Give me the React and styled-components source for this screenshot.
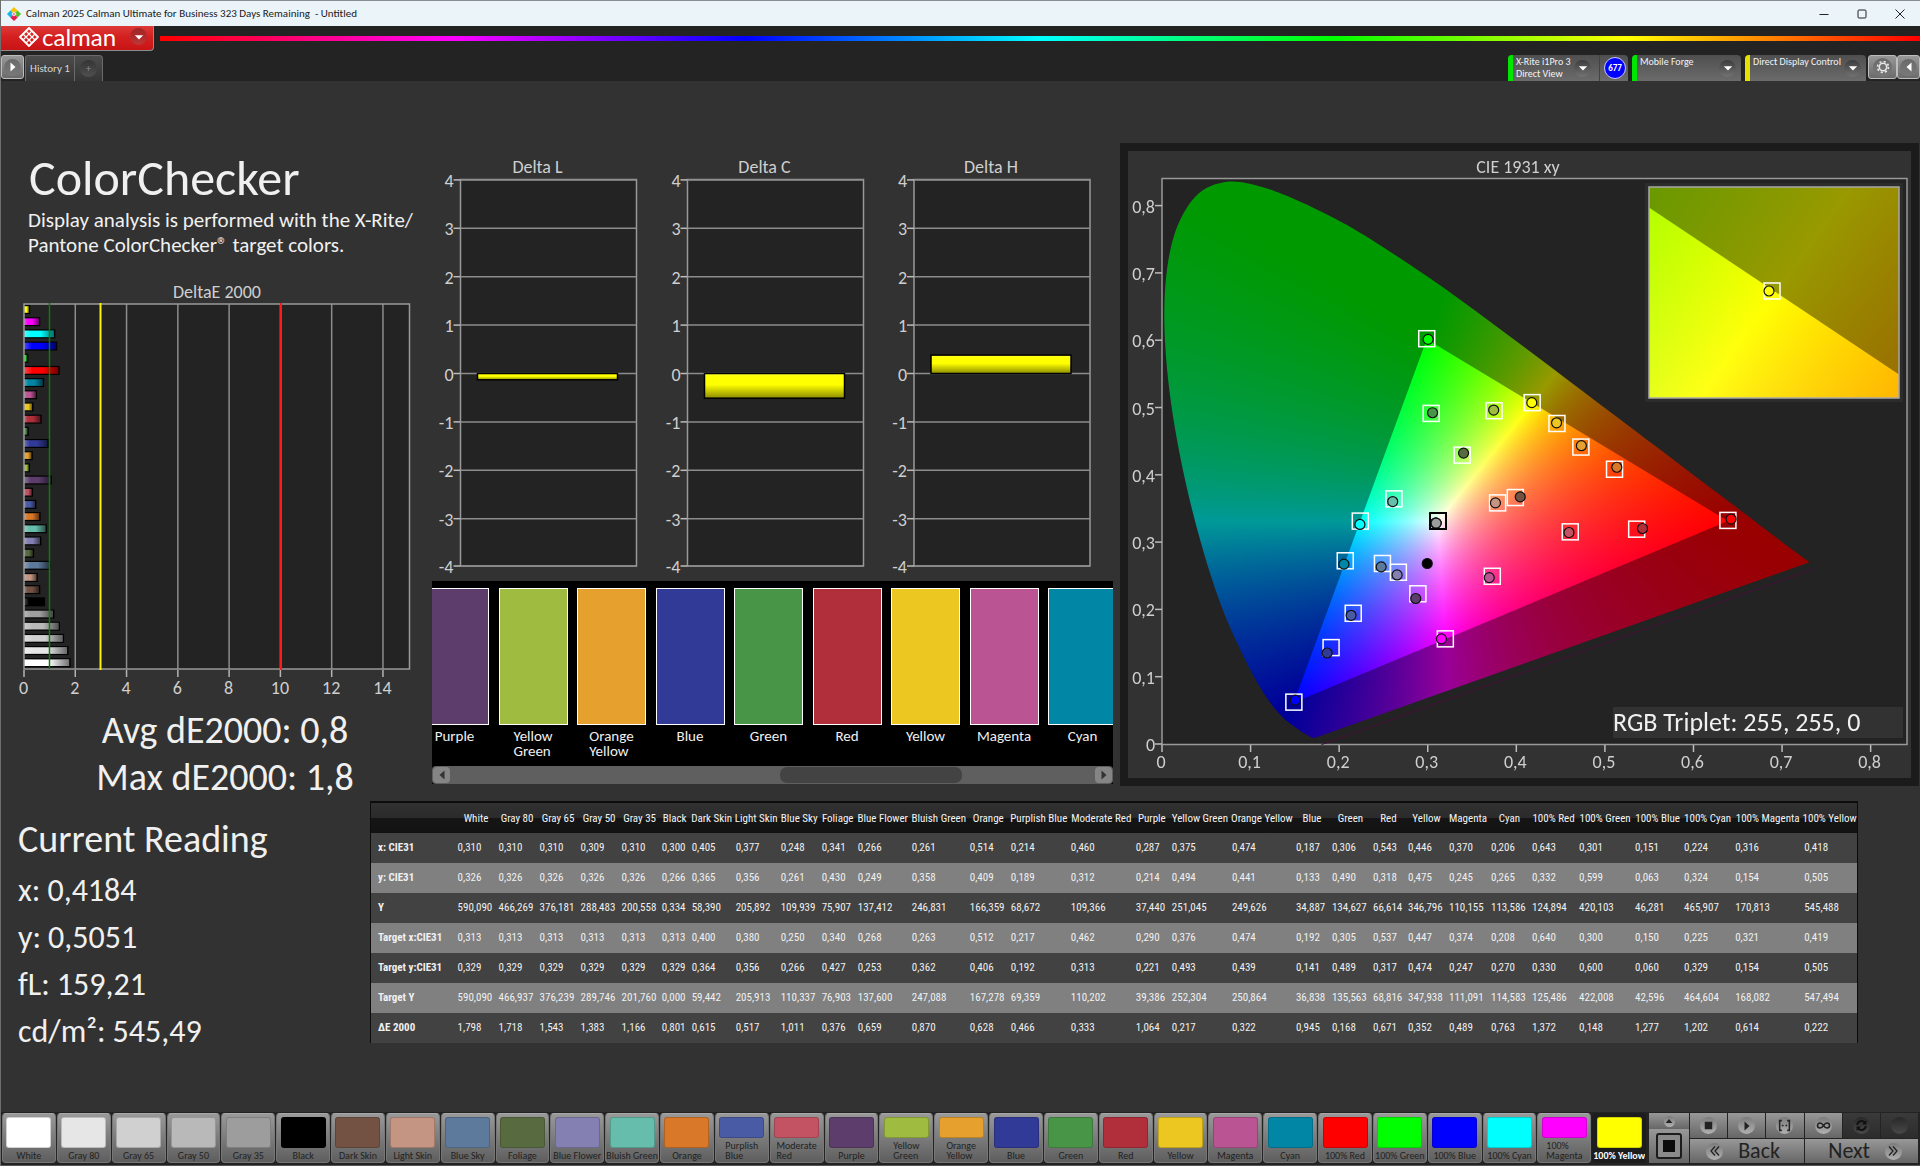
import React, { useEffect, useRef } from 'react';
import styled, { createGlobalStyle, css } from 'styled-components';

const SANS = "Carlito, Calibri, Lato, sans-serif";
const NARROW = "'Roboto Condensed', 'Noto Sans', sans-serif";

/* ---------- data ---------- */

const PATCHES = [
  ['White', '#ffffff', 0.310, 0.326, '590,090', 0.313, 0.329, '590,090', 1.798],
  ['Gray 80', '#e6e6e6', 0.310, 0.326, '466,269', 0.313, 0.329, '466,937', 1.718],
  ['Gray 65', '#d0d0d0', 0.310, 0.326, '376,181', 0.313, 0.329, '376,239', 1.543],
  ['Gray 50', '#b9b9b9', 0.309, 0.326, '288,483', 0.313, 0.329, '289,746', 1.383],
  ['Gray 35', '#9d9d9d', 0.310, 0.326, '200,558', 0.313, 0.329, '201,760', 1.166],
  ['Black', '#000000', 0.300, 0.266, '0,334', 0.313, 0.329, '0,000', 0.801],
  ['Dark Skin', '#735244', 0.405, 0.365, '58,390', 0.400, 0.364, '59,442', 0.615],
  ['Light Skin', '#c39582', 0.377, 0.356, '205,892', 0.380, 0.356, '205,913', 0.517],
  ['Blue Sky', '#5d7a9d', 0.248, 0.261, '109,939', 0.250, 0.266, '110,337', 1.011],
  ['Foliage', '#586b40', 0.341, 0.430, '75,907', 0.340, 0.427, '76,903', 0.376],
  ['Blue Flower', '#8480b1', 0.266, 0.249, '137,412', 0.268, 0.253, '137,600', 0.659],
  ['Bluish Green', '#66bdab', 0.261, 0.358, '246,831', 0.263, 0.362, '247,088', 0.870],
  ['Orange', '#d97829', 0.514, 0.409, '166,359', 0.512, 0.406, '167,278', 0.628],
  ['Purplish Blue', '#4a5ba6', 0.214, 0.189, '68,672', 0.217, 0.192, '69,359', 0.466],
  ['Moderate Red', '#c35362', 0.460, 0.312, '109,366', 0.462, 0.313, '110,202', 0.333],
  ['Purple', '#5c3d6b', 0.287, 0.214, '37,440', 0.290, 0.221, '39,386', 1.064],
  ['Yellow Green', '#9fbb40', 0.375, 0.494, '251,045', 0.376, 0.493, '252,304', 0.217],
  ['Orange Yellow', '#e6a02e', 0.474, 0.441, '249,626', 0.474, 0.439, '250,864', 0.322],
  ['Blue', '#323a97', 0.187, 0.133, '34,887', 0.192, 0.141, '36,838', 0.945],
  ['Green', '#489548', 0.306, 0.490, '134,627', 0.305, 0.489, '135,563', 0.168],
  ['Red', '#b02f3a', 0.543, 0.318, '66,614', 0.537, 0.317, '68,816', 0.671],
  ['Yellow', '#ecc721', 0.446, 0.475, '346,796', 0.447, 0.474, '347,938', 0.352],
  ['Magenta', '#bb5493', 0.370, 0.245, '110,155', 0.374, 0.247, '111,091', 0.489],
  ['Cyan', '#0286a6', 0.206, 0.265, '113,586', 0.208, 0.270, '114,583', 0.763],
  ['100% Red', '#ff0000', 0.643, 0.332, '124,894', 0.640, 0.330, '125,486', 1.372],
  ['100% Green', '#00ff00', 0.301, 0.599, '420,103', 0.300, 0.600, '422,008', 0.148],
  ['100% Blue', '#0000ff', 0.151, 0.063, '46,281', 0.150, 0.060, '42,596', 1.277],
  ['100% Cyan', '#00ffff', 0.224, 0.324, '465,907', 0.225, 0.329, '464,604', 1.202],
  ['100% Magenta', '#ff00ff', 0.316, 0.154, '170,813', 0.321, 0.154, '168,082', 0.614],
  ['100% Yellow', '#ffff00', 0.418, 0.505, '545,488', 0.419, 0.505, '547,494', 0.222],
].map(([name, color, x, y, Y, tx, ty, tY, dE]) => ({ name, color, x, y, Y, tx, ty, tY, dE }));

const COLUMN_WIDTHS = [
  85, 41, 41, 41, 41, 40, 30, 44, 45, 41, 36, 54, 58, 41, 60, 65, 36, 60, 64, 36, 41, 35, 41, 42, 41,
  47, 56, 49, 51, 69, 55,
];

const comma = (n) => n.toFixed(3).replace('.', ',');

const TABLE_ROWS = [
  ['x: CIE31', (p) => comma(p.x)],
  ['y: CIE31', (p) => comma(p.y)],
  ['Y', (p) => p.Y],
  ['Target x:CIE31', (p) => comma(p.tx)],
  ['Target y:CIE31', (p) => comma(p.name === 'Bluish Green' ? 0.362 : p.ty)],
  ['Target Y', (p) => p.tY],
  ['ΔE 2000', (p) => comma(p.dE)],
];

const TWO_LINE = ['Purplish Blue', 'Moderate Red', 'Yellow Green', 'Orange Yellow', '100% Magenta'];

const LOCUS = [
  [0.1733, 0.0075], [0.1714, 0.0078], [0.1689, 0.009], [0.1644, 0.0125], [0.1566, 0.0187],
  [0.144, 0.0307], [0.1355, 0.0409], [0.1241, 0.0588], [0.1096, 0.0878], [0.0913, 0.1337],
  [0.0687, 0.2017], [0.0454, 0.296], [0.0235, 0.4137], [0.0082, 0.5384], [0.0039, 0.6548],
  [0.0139, 0.7502], [0.0389, 0.812], [0.0743, 0.8338], [0.1142, 0.8262], [0.1547, 0.8059],
  [0.1929, 0.7816], [0.2296, 0.7543], [0.3016, 0.6923], [0.3731, 0.6245], [0.4441, 0.5547],
  [0.5125, 0.4866], [0.5752, 0.4242], [0.627, 0.3725], [0.6658, 0.334], [0.6915, 0.3083],
  [0.717, 0.2829], [0.732, 0.2685],
];

/* ---------- page ---------- */

const GlobalStyle = createGlobalStyle`
  * { box-sizing: border-box; }
  body { margin: 0; background: #323232; color: #f0f0f0; font-family: ${SANS}; }
  button { font-family: inherit; border: 0; padding: 0; margin: 0; cursor: pointer; }
  h1, h2, p, dl, dd { margin: 0; font-weight: 400; }
`;

const Page = styled.div`
  min-height: 100vh;
  display: flex;
  flex-direction: column;
  border-left: 1px solid #6e6e6e;
`;

const TitleBar = styled.header`
  height: 26px;
  display: flex;
  align-items: center;
  gap: 5px;
  padding: 0 14px 0 6px;
  border-top: 1px solid #8a8f92;
  background: #ebf4f9;
  color: #1a1a1a;
  font-size: 11px;
`;

const WindowTitle = styled.span`
  flex: 1;
  white-space: pre;
`;

const WindowButtons = styled.div`
  display: flex;
  gap: 26px;
`;

const WindowButton = styled.button`
  width: 12px;
  height: 12px;
  background: none;
  display: flex;
`;

const Chrome = styled.div`
  background: #232323;
`;

const BrandRow = styled.div`
  display: flex;
  align-items: flex-start;
  gap: 6px;
  height: 29px;
`;

const BrandButton = styled.button`
  width: 153px;
  height: 25px;
  display: flex;
  align-items: center;
  padding: 0 6px 3px 18px;
  gap: 3px;
  color: #fff;
  background: linear-gradient(#dd3a38, #d42020 45%, #c81414);
  border-right: 1px solid #8d8d8d;
  border-bottom: 1px solid #8d8d8d;
  border-radius: 0 0 4px 0;
`;

const BrandName = styled.span`
  flex: 1;
  text-align: left;
  font: 24px/20px Lato, sans-serif;
`;

const Rainbow = styled.div`
  flex: 1;
  height: 5px;
  margin-top: 10px;
  background: linear-gradient(90deg, #f00, #f0f, #00f, #0ff, #0f0, #ff0, #f00);
`;

const TabRow = styled.div`
  display: flex;
  justify-content: space-between;
  height: 26px;
`;

const TabGroup = styled.div`
  display: flex;
  align-items: stretch;
  gap: ${(p) => p.$gap || 0}px;
`;

const Knob = styled.span`
  flex: none;
  width: ${(p) => p.$size || 17}px;
  height: ${(p) => p.$size || 17}px;
  border-radius: 50%;
  display: flex;
  align-items: center;
  justify-content: center;
  background: ${(p) => p.$light
    ? 'linear-gradient(#7b7b7b, #b0b0b0)'
    : 'linear-gradient(rgba(0,0,0,0.28), rgba(150,150,150,0.25))'};
`;

const SquareButton = styled.button`
  width: ${(p) => p.$width || 29}px;
  height: 24px;
  display: flex;
  align-items: center;
  justify-content: center;
  color: #fff;
  background: linear-gradient(#989898, #6b6b6b);
  border: 1px solid #bdbdbd;
  border-radius: 3px;
`;

const Tab = styled.button`
  width: ${(p) => p.$width}px;
  display: flex;
  align-items: center;
  justify-content: center;
  color: #d6d6d6;
  font-size: 11px;
  background: linear-gradient(#4c4c4c, #353535);
  border: 1px solid #6a6a6a;
  border-bottom: 0;
  border-radius: ${(p) => p.$radius};
  & + & { border-left: 0; color: #8a8a8a; }
`;

const Device = styled.button`
  width: ${(p) => p.$width}px;
  display: flex;
  align-items: flex-start;
  gap: 3px;
  padding-right: ${(p) => p.$inset || 5}px;
  color: #f4f4f4;
  font-size: 10px;
  line-height: 12px;
  text-align: left;
  background: linear-gradient(#4f4f4f, #6b6b6b);
  border-radius: 4px 4px 0 0;
  overflow: hidden;
  &::before {
    content: '';
    width: 5px;
    align-self: stretch;
    background: ${(p) => p.$status};
  }
`;

const DeviceName = styled.span`
  flex: 1;
  padding-top: 1px;
  white-space: pre;
`;

const DeviceArrow = styled.span`
  align-self: center;
`;

const Counter = styled.span`
  align-self: stretch;
  display: flex;
  align-items: center;
  margin-left: 5px;
  padding-left: 4px;
  border-left: 1px solid #424242;
`;

const CounterBadge = styled.span`
  width: 22px;
  height: 22px;
  border-radius: 50%;
  border: 1px solid #c8c8ff;
  background: #0000ff;
  color: #fff;
  font: bold 9px/20px ${SANS};
  text-align: center;
`;

const Main = styled.main`
  flex: 1;
  padding-top: 62px;
`;

const Analysis = styled.section`
  display: grid;
  grid-template-columns: 431fr 688fr 800fr;
  align-items: start;
`;

const Column = styled.div`
  padding-top: 4px;
  min-width: 0;
`;

const Title = styled.h1`
  padding-left: 28px;
  font-size: 50px;
  line-height: 61px;
`;

const Intro = styled.p`
  padding-left: 27px;
  font-size: 21px;
  line-height: 25px;
`;

const Summary = styled.p`
  padding-left: 17px;
  text-align: center;
  font-size: 38px;
  line-height: 47px;
`;

const Chart = styled.svg`
  display: block;
  width: 100%;
  height: auto;
  font-family: ${SANS};
  font-size: 18px;
  fill: #cfcfcf;
`;

const Strip = styled.div`
  margin-right: 7px;
  overflow: hidden;
  background: #000;
`;

const StripRow = styled.div`
  display: flex;
  justify-content: space-between;
  height: 185px;
  margin: 0 -3px 0 -11px;
  padding-top: 7px;
`;

const StripItem = styled.div`
  width: 67px;
  display: flex;
  flex-direction: column;
  align-items: center;
  font-size: 15px;
  line-height: 15px;
  white-space: pre-line;
  &::before {
    content: '';
    width: 100%;
    height: 135px;
    margin-bottom: 4px;
    border: 1px solid #fff;
    background: ${(p) => p.$color};
  }
`;

const ScrollBar = styled.div`
  display: flex;
  justify-content: space-between;
  align-items: center;
  height: 18px;
  padding: 0 1px;
  background: #5f5f5f;
  border-radius: 4px;
`;

const ScrollTrack = styled.div`
  flex: 1;
  display: grid;
  grid-template-columns: 331fr 182fr 133fr;
`;

const ScrollThumb = styled.div`
  grid-column: 2;
  height: 16px;
  border-radius: 7px;
  background: #434343;
`;

const ScrollButton = styled.button`
  width: 17px;
  height: 16px;
  display: flex;
  align-items: center;
  justify-content: center;
  background: #858585;
  border-radius: 4px;
`;

const CiePanel = styled.div`
  border: 8px solid #1b1b1b;
  margin-right: 1px;
  background: #323232;
`;

const Layer = styled.div`
  position: relative;
`;

const CieCanvas = styled.canvas`
  position: absolute;
  left: calc(100% * 34 / 783);
  top: calc(100% * 27 / 627);
  width: calc(100% * 745 / 783);
  height: calc(100% * 566 / 627);
`;

const OverlayChart = styled(Chart)`
  position: relative;
`;

const Results = styled.section`
  display: grid;
  grid-template-columns: 369fr 1488fr 62fr;
  align-items: start;
`;

const Reading = styled.div`
  padding: 15px 0 0 17px;
  white-space: nowrap;
`;

const ReadingTitle = styled.h2`
  margin-bottom: 4px;
  font-size: 38px;
  line-height: 47px;
`;

const ReadingList = styled.dl`
  font-size: 32px;
  line-height: 47px;
`;

const ReadingItem = styled.div`
  display: flex;
  gap: 7px;
`;

const DataTable = styled.table`
  width: 100%;
  table-layout: fixed;
  border-collapse: collapse;
  border-top: 2px solid #0c0c0c;
  border-left: 1px solid #0c0c0c;
  border-right: 1px solid #0c0c0c;
  font: 11px/14px ${NARROW};
  white-space: nowrap;
  th, td { padding: 0 0 0 2px; text-align: left; }
  thead tr { height: 31px; background: linear-gradient(#313131, #2b2b2b 50%, #151515 51%, #121212); }
  thead th { padding: 2px 0 0; text-align: center; font-weight: 400; color: #f4f4f4; }
  tbody tr { height: 30px; background: #424242; }
  tbody tr:nth-child(even) { background: #808080; }
  tbody th { padding-left: 7px; font-weight: 700; }
`;

const Footer = styled.footer`
  display: grid;
  grid-template-columns: 1645fr 274fr;
  height: 54px;
  padding: 1px 0 2px 1px;
  background: #232323;
  border-bottom: 1px solid #555;
`;

const PatchBar = styled.nav`
  display: grid;
  grid-template-columns: repeat(30, minmax(0, 1fr));
  gap: 1px;
`;

const PatchButton = styled.button`
  display: flex;
  flex-direction: column;
  align-items: center;
  justify-content: space-between;
  padding: 3px 0 1px;
  color: #222;
  background: linear-gradient(#999, #5e5e5e);
  border: 1px solid #777;
  border-top-color: #a8a8a8;
  border-radius: 4px;
  font-size: 10px;
  line-height: 10px;
  text-align: left;
  white-space: pre;
  overflow: hidden;
  ${(p) => p.$selected && css`
    color: #fff;
    font-weight: 700;
    background: #1d1d1d;
    border-color: #1d1d1d;
  `}
`;

const PatchColor = styled.span`
  width: 45px;
  height: ${(p) => (p.$short ? 21 : 31)}px;
  border-radius: 3px;
  background: ${(p) => p.$color};
  border: 1px solid rgba(0, 0, 0, 0.18);
`;

const Transport = styled.div`
  display: grid;
  grid-template-columns: 40px 1fr;
  gap: 1px;
  padding-left: 3px;
  padding-right: 2px;
`;

const TransportSide = styled.div`
  display: grid;
  grid-template-rows: 16px 1fr;
`;

const TransportMain = styled.div`
  display: grid;
  grid-template-rows: 25px 1fr;
  gap: 1px;
`;

const ButtonRow = styled.div`
  display: grid;
  grid-auto-flow: column;
  grid-auto-columns: 1fr;
  gap: 1px;
`;

const MetalButton = styled.button`
  display: flex;
  align-items: center;
  justify-content: center;
  color: #222;
  background: ${(p) => (p.$dim ? 'linear-gradient(#3a3a3a, #2c2c2c)' : 'linear-gradient(#989898, #666)')};
`;

const StepButton = styled(MetalButton)`
  justify-content: ${(p) => (p.$end ? 'flex-end' : 'flex-start')};
  gap: 15px;
  padding: 0 16px;
  font-size: 22px;
  line-height: 22px;
`;

const StopFrame = styled.span`
  width: 26px;
  height: 26px;
  display: flex;
  align-items: center;
  justify-content: center;
  border: 2px solid #1c1c1c;
  border-radius: 3px;
  background: #8a8a8a;
  &::before {
    content: '';
    width: 12px;
    height: 12px;
    background: #0c0c0c;
  }
`;

/* ---------- icons ---------- */

const Icon = ({ size = 12, children, ...rest }) => (
  <svg width={size} height={size} viewBox="0 0 12 12" fill="none" stroke="none" aria-hidden="true" {...rest}>
    {children}
  </svg>
);
const Down = () => <Icon size={10}><path d="M1 4h10l-5 5z" fill="#fff" /></Icon>;
const Play = ({ color = '#fff' }) => <Icon size={10}><path d="M3 0.5v11l6-5.5z" fill={color} /></Icon>;
const PlayLeft = ({ color = '#fff' }) => <Icon size={10}><path d="M9 0.5v11l-6-5.5z" fill={color} /></Icon>;
const Stop = () => <Icon size={9}><path d="M1 1h10v10h-10z" fill="#222" /></Icon>;

const AppIcon = () => (
  <svg width="14" height="14" viewBox="0 0 14 14" aria-hidden="true">
    <path d="M7 0l3.6 3.6L7 7.2 3.4 3.6z" fill="#f7c500" />
    <path d="M3.4 3.5L7 7.1l-3.600 3.500L0 7.100z" fill="#12b6e8" />
    <path d="M10.6 3.5L14 7.1l-3.400 3.500L7 7.100z" fill="#54c320" />
    <path d="M7 6.9l3.6 3.6L7 14l-3.600-3.500z" fill="#e6194b" />
    <path d="M7 4.400l2.600 2.600L7 9.600 4.400 7z" fill="#fff" />
    <path d="M7 5.300l1.700 1.700L7 8.700 5.300 7z" fill="#f08cae" />
  </svg>
);

const BrandMark = () => (
  <svg width="20" height="20" viewBox="0 0 20 20" aria-hidden="true">
    <path d="M10 1l9 9-9 9L1 10z" fill="none" stroke="#fff" strokeWidth="1.8" strokeLinejoin="round" />
    <path d="M7 4l9 9M4 7l9 9M13 4l-9 9M16 7l-9 9" stroke="#fff" strokeWidth="1.200" />
  </svg>
);

const Gear = () => (
  <Icon size={14}>
    <circle cx="6" cy="6" r="3.2" stroke="#e6e6e6" strokeWidth="1.4" />
    <circle cx="6" cy="6" r="4.7" stroke="#e6e6e6" strokeWidth="1.4" strokeDasharray="1.8 1.89" />
  </Icon>
);
const Bracket = () => (
  <Icon size={13} stroke="#222" strokeWidth="1.4">
    <path d="M3.500 1.500H1.500v9h2M8.500 1.500h2v9h-2M3.500 6h1.600M6.900 6h1.600" />
  </Icon>
);
const Infinity8 = () => (
  <Icon size={15} stroke="#222" strokeWidth="1.2">
    <path d="M6 6C4.800 4.200 3.900 4 3.200 4a2 2 0 0 0 0 4C3.900 8 4.800 7.800 6 6s2.100-2 2.800-2a2 2 0 0 1 0 4C8.100 8 7.200 7.800 6 6z" />
  </Icon>
);
const Refresh = () => (
  <Icon size={13} stroke="#111" strokeWidth="1.8">
    <path d="M2 5.500A4 4 0 0 1 9 3.300M10 6.500A4 4 0 0 1 3 8.700" />
    <path d="M10.500 1v4H6.500zM1.500 11V7h4z" fill="#111" stroke="none" />
  </Icon>
);
const Chevrons = ({ right }) => (
  <Icon size={12} stroke="#222" strokeWidth="1.3">
    <path d={right ? 'M2 1.500L6 6l-4 4.500M6 1.500L10 6l-4 4.500' : 'M10 1.500L6 6l4 4.500M6 1.500L2 6l4 4.500'} />
  </Icon>
);

/* ---------- charts ---------- */

function DeltaEChart() {
  const x = (v) => 24 + v * 25.64;
  const bars = [...PATCHES].reverse();
  return (
    <Chart viewBox="1 259 431 449" role="img" aria-label="DeltaE 2000">
      <defs>
        <linearGradient id="barShade">
          <stop offset="0" stopColor="#fff" stopOpacity="0.3" />
          <stop offset="0.25" stopColor="#fff" stopOpacity="0" />
          <stop offset="0.55" stopColor="#000" stopOpacity="0" />
          <stop offset="1" stopColor="#000" stopOpacity="0.55" />
        </linearGradient>
      </defs>
      <text x="217" y="299" textAnchor="middle">DeltaE 2000</text>
      <rect x="24" y="305" width="385.500" height="365" fill="#232323" />
      {[2, 4, 6, 8, 10, 12, 14].map((v) => (
        <path key={v} d={`M${x(v)} 305V670`} stroke="#8c8c8c" strokeWidth="1.500" />
      ))}
      {bars.map((p, i) => {
        const y = 306 + i * 12.18;
        const width = p.dE * 25.64;
        return (
          <g key={p.name}>
            <rect x="24" y={y} width={width + 0.5} height="9" fill="#000" />
            <rect x="24" y={y + 1.2} width={Math.max(1, width - 1)} height="6.600" fill={p.color} />
            <rect x="24" y={y + 1.2} width={Math.max(1, width - 1)} height="6.600" fill="url(#barShade)" />
          </g>
        );
      })}
      <rect x="24" y="305" width="385.500" height="365" fill="none" stroke="#999" strokeWidth="1.500" />
      <path d="M49.500 304V670" stroke="#0a7d0a" strokeWidth="1.500" />
      <path d="M100.500 304V671" stroke="#fbf300" strokeWidth="2" />
      <path d="M281 304V671" stroke="#ff1a1a" strokeWidth="2" />
      {[0, 2, 4, 6, 8, 10, 12, 14].map((v) => (
        <g key={v}>
          <path d={`M${x(v)} 671V678`} stroke="#b5b5b5" strokeWidth="1.500" />
          <text x={x(v) - 0.5} y="695" textAnchor="middle">{v}</text>
        </g>
      ))}
    </Chart>
  );
}

function DeltaCharts() {
  const y0 = 373.5;
  const unit = 48.4;
  const charts = [
    ['Delta L', 460.5, -0.13],
    ['Delta C', 687.5, -0.51],
    ['Delta H', 914, 0.38],
  ];
  return (
    <Chart viewBox="432 147 688 434" role="img" aria-label="Delta L, Delta C and Delta H">
      <defs>
        <linearGradient id="yellowBar" x2="0" y2="1">
          <stop offset="0" stopColor="#ffff30" />
          <stop offset="0.15" stopColor="#ffff00" />
          <stop offset="0.45" stopColor="#ffff00" />
          <stop offset="1" stopColor="#8c8c00" />
        </linearGradient>
      </defs>
      {charts.map(([name, left, value]) => {
        const top = value > 0 ? y0 - value * unit : y0;
        return (
          <g key={name}>
            <text x={left + 77} y="173" textAnchor="middle">{name}</text>
            <rect x={left} y="179.500" width="176" height="386.500" fill="#232323" stroke="#999" strokeWidth="1.500" />
            {[4, 3, 2, 1, 0, -1, -2, -3, -4].map((v) => {
              const y = v === -4 ? 566 : y0 - v * unit;
              return (
                <g key={v}>
                  <path d={`M${left - 7} ${y}H${left}`} stroke="#bbb" strokeWidth="1.500" />
                  <path d={`M${left} ${y}h176`} stroke="#8c8c8c" strokeWidth="1.500" />
                  <text x={left - 7} y={y + 7} textAnchor="end">{v}</text>
                </g>
              );
            })}
            <rect
              x={left + 17} y={top} width="140" height={Math.abs(value) * unit}
              fill="url(#yellowBar)" stroke="#000" strokeWidth="1.500"
            />
          </g>
        );
      })}
    </Chart>
  );
}

function paintPixels(width, height, toXY, gain) {
  const c = document.createElement('canvas');
  c.width = width;
  c.height = height;
  const ctx = c.getContext('2d');
  const img = ctx.createImageData(width, height);
  for (let j = 0; j < height; j += 1) {
    for (let i = 0; i < width; i += 1) {
      const [x, y] = toXY(i + 0.5, j + 0.5);
      const X = x / y;
      const Z = (1 - x - y) / y;
      const rgb = [
        3.2406 * X - 1.5372 - 0.4986 * Z,
        -0.9689 * X + 1.8758 + 0.0415 * Z,
        0.0557 * X - 0.204 + 1.057 * Z,
      ].map((v) => Math.max(0, v));
      const max = Math.max(...rgb) || 1;
      const k = (j * width + i) * 4;
      rgb.forEach((v, n) => {
        img.data[k + n] = 255 * gain * (v / max);
      });
      img.data[k + 3] = 255;
    }
  }
  ctx.putImageData(img, 0, 0);
  return c;
}

function tracePolygon(ctx, points) {
  ctx.beginPath();
  points.forEach(([x, y], i) => (i ? ctx.lineTo(x, y) : ctx.moveTo(x, y)));
  ctx.closePath();
}

const PLOT = { left: 1162, top: 178, width: 745, height: 566, kx: 885.8, ky: 673 };
const INSET = { left: 487, top: 9, width: 250, height: 211, kx: 5000, ky: 4200, cx: 612, cy: 113 };
const GAMUT = [[0.64, 0.33], [0.3, 0.6], [0.15, 0.06]];

function paintDiagram(canvas) {
  const { width, height, kx, ky } = PLOT;
  const ctx = canvas.getContext('2d');
  const toPx = ([x, y]) => [x * kx - 1, height - 1 - y * ky];
  const toXY = (i, j) => [(i + 1) / kx, Math.max(0.0005, (height - 1 - j) / ky)];

  ctx.fillStyle = '#232323';
  ctx.fillRect(0, 0, width, height);

  const pts = LOCUS.map(toPx);
  ctx.save();
  ctx.beginPath();
  ctx.moveTo(...pts[0]);
  for (let i = 0; i < pts.length - 1; i += 1) {
    const p0 = pts[Math.max(0, i - 1)];
    const p1 = pts[i];
    const p2 = pts[i + 1];
    const p3 = pts[Math.min(pts.length - 1, i + 2)];
    ctx.bezierCurveTo(
      p1[0] + (p2[0] - p0[0]) / 6, p1[1] + (p2[1] - p0[1]) / 6,
      p2[0] - (p3[0] - p1[0]) / 6, p2[1] - (p3[1] - p1[1]) / 6,
      p2[0], p2[1],
    );
  }
  ctx.closePath();
  ctx.clip();
  ctx.drawImage(paintPixels(width, height, toXY, 0.6), 0, 0);
  ctx.restore();

  ctx.save();
  tracePolygon(ctx, GAMUT.map(toPx));
  ctx.clip();
  ctx.drawImage(paintPixels(width, height, toXY, 1), 0, 0);
  ctx.restore();

  const a = INSET;
  const toInsetPx = ([x, y]) => [a.cx + (x - 0.419) * a.kx, a.cy - (y - 0.5055) * a.ky];
  const toInsetXY = (i, j) => [
    0.419 + (i + a.left - a.cx) / a.kx,
    0.5055 - (j + a.top - a.cy) / a.ky,
  ];
  ctx.fillStyle = '#2c2c2c';
  ctx.fillRect(a.left - 4, a.top - 4, a.width + 8, a.height + 8);
  ctx.drawImage(paintPixels(a.width, a.height, toInsetXY, 0.6), a.left, a.top);
  ctx.save();
  ctx.beginPath();
  ctx.rect(a.left, a.top, a.width, a.height);
  ctx.clip();
  tracePolygon(ctx, GAMUT.map(toInsetPx));
  ctx.clip();
  ctx.drawImage(paintPixels(a.width, a.height, toInsetXY, 1), a.left, a.top);
  ctx.restore();
}

function CieChart() {
  const ref = useRef(null);
  useEffect(() => paintDiagram(ref.current), []);
  const x = (v) => PLOT.left + v * PLOT.kx;
  const y = (v) => 744 - v * PLOT.ky;
  const label = (v) => (v ? `0,${v}` : '0');
  const ticks = [0, 1, 2, 3, 4, 5, 6, 7, 8];
  return (
    <Layer>
      <CieCanvas ref={ref} width={PLOT.width} height={PLOT.height} />
      <OverlayChart viewBox="1128 151 783 627" role="img" aria-label="CIE 1931 xy">
        <text x="1518" y="173" textAnchor="middle">CIE 1931 xy</text>
        <rect x="1162" y="178.500" width="745" height="566" fill="none" stroke="#999" strokeWidth="1.500" />
        <path d={`M${x(0.18)} ${y(-0.001)}L${x(0.735)} ${y(0.26)}`} stroke="#451038" strokeWidth="1" />
        {ticks.map((v) => (
          <g key={v}>
            <path d={`M${x(v / 10)} 745v7`} stroke="#bbb" strokeWidth="1.500" />
            <path d={`M1162 ${y(v / 10)}h-7`} stroke="#bbb" strokeWidth="1.500" />
            <text x={x(v / 10) - 1} y="768" textAnchor="middle">{label(v)}</text>
            <text x="1155" y={y(v / 10) + 7} textAnchor="end">{label(v)}</text>
          </g>
        ))}
        {PATCHES.filter((p) => p.name !== 'White').map((p) => {
          const neutral = p.tx === 0.313;
          return (
            <g key={p.name} strokeWidth="1.500">
              <rect
                x={x(p.tx) - 9} y={y(p.ty) - 9.5} width="16" height="16"
                fill="none" stroke={neutral ? '#000' : '#fff'}
              />
              <circle cx={x(p.x) - 0.5} cy={y(p.y) - 1.5} r="5" fill={p.color} stroke="#111" strokeWidth="1.200" />
            </g>
          );
        })}
        <rect x="1649" y="187" width="250" height="211" fill="none" stroke="#a8a8a8" strokeWidth="1.500" />
        <rect x="1764" y="283" width="16" height="16" fill="none" stroke="#fff" strokeWidth="1.500" />
        <circle cx="1769" cy="291" r="5" fill="#ffff00" stroke="#111" strokeWidth="1.200" />
        <rect x="1613" y="707" width="290" height="31" fill="#323232" />
        <text x="1613" y="731" fontSize="26" fill="#f0f0f0">RGB Triplet: 255, 255, 0</text>
      </OverlayChart>
    </Layer>
  );
}

/* ---------- app ---------- */

const twoLines = (name) => name.replace(' ', '\n');

export default function App() {
  return (
    <Page>
      <GlobalStyle />
      <TitleBar>
        <AppIcon />
        <WindowTitle>Calman 2025 Calman Ultimate for Business 323 Days Remaining  - Untitled</WindowTitle>
        <WindowButtons>
          <WindowButton aria-label="Minimize"><Icon stroke="#222"><path d="M1.500 6.500h9" /></Icon></WindowButton>
          <WindowButton aria-label="Maximize"><Icon stroke="#222"><rect x="2" y="2" width="8" height="8" rx="1" /></Icon></WindowButton>
          <WindowButton aria-label="Close"><Icon stroke="#222"><path d="M1.500 1.500l9 9M10.500 1.500l-9 9" /></Icon></WindowButton>
        </WindowButtons>
      </TitleBar>

      <Chrome>
        <BrandRow>
          <BrandButton aria-haspopup="menu">
            <BrandMark />
            <BrandName>calman</BrandName>
            <Knob><Down /></Knob>
          </BrandButton>
          <Rainbow />
        </BrandRow>
        <TabRow>
          <TabGroup $gap={1}>
            <SquareButton $width={23} aria-label="Expand left panel"><Knob><Play /></Knob></SquareButton>
            <TabGroup>
              <Tab $width={50} $radius="3px 0 0 0">History 1</Tab>
              <Tab $width={28} $radius="0 4px 0 0" aria-label="Add tab"><Knob>+</Knob></Tab>
            </TabGroup>
          </TabGroup>
          <TabGroup $gap={4}>
            <Device $width={120} $inset={2} $status="#00e600" aria-haspopup="menu">
              <DeviceName>{'X-Rite i1Pro 3\nDirect View'}</DeviceName>
              <DeviceArrow><Knob><Down /></Knob></DeviceArrow>
              <Counter><CounterBadge>677</CounterBadge></Counter>
            </Device>
            <Device $width={109} $status="#00e600" aria-haspopup="menu">
              <DeviceName>Mobile Forge</DeviceName>
              <DeviceArrow><Knob><Down /></Knob></DeviceArrow>
            </Device>
            <TabGroup $gap={2}>
              <Device $width={121} $status="#e6e000" aria-haspopup="menu">
                <DeviceName>Direct Display Control</DeviceName>
                <DeviceArrow><Knob><Down /></Knob></DeviceArrow>
              </Device>
              <TabGroup>
                <SquareButton aria-label="Settings"><Knob $size={19}><Gear /></Knob></SquareButton>
                <SquareButton $width={23} aria-label="Expand right panel"><Knob><PlayLeft /></Knob></SquareButton>
              </TabGroup>
            </TabGroup>
          </TabGroup>
        </TabRow>
      </Chrome>

      <Main>
        <Analysis>
          <Column>
            <Title>ColorChecker</Title>
            <Intro>
              Display analysis is performed with the X-Rite/<br />
              Pantone ColorChecker® target colors.
            </Intro>
            <DeltaEChart />
            <Summary>Avg dE2000: 0,8<br />Max dE2000: 1,8</Summary>
          </Column>

          <Column>
            <DeltaCharts />
            <Strip>
              <StripRow>
                {PATCHES.slice(15, 24).map((p) => (
                  <StripItem key={p.name} $color={p.color}>{twoLines(p.name)}</StripItem>
                ))}
              </StripRow>
              <ScrollBar>
                <ScrollButton aria-label="Scroll left"><PlayLeft color="#333" /></ScrollButton>
                <ScrollTrack><ScrollThumb /></ScrollTrack>
                <ScrollButton aria-label="Scroll right"><Play color="#333" /></ScrollButton>
              </ScrollBar>
            </Strip>
          </Column>

          <CiePanel>
            <CieChart />
          </CiePanel>
        </Analysis>

        <Results>
          <Reading>
            <ReadingTitle>Current Reading</ReadingTitle>
            <ReadingList>
              {[['x:', '0,4184'], ['y:', '0,5051'], ['fL:', '159,21'], ['cd/m²:', '545,49']].map(([k, v]) => (
                <ReadingItem key={k}><dt>{k}</dt><dd>{v}</dd></ReadingItem>
              ))}
            </ReadingList>
          </Reading>
          <DataTable>
            <colgroup>{COLUMN_WIDTHS.map((w, i) => <col key={i} width={w} />)}</colgroup>
            <thead>
              <tr>
                <th aria-label="Measure" />
                {PATCHES.map((p) => <th key={p.name} scope="col">{p.name}</th>)}
              </tr>
            </thead>
            <tbody>
              {TABLE_ROWS.map(([name, get]) => (
                <tr key={name}>
                  <th scope="row">{name}</th>
                  {PATCHES.map((p) => <td key={p.name}>{get(p)}</td>)}
                </tr>
              ))}
            </tbody>
          </DataTable>
        </Results>
      </Main>

      <Footer>
        <PatchBar aria-label="Patches">
          {PATCHES.map((p) => {
            const split = TWO_LINE.includes(p.name);
            return (
              <PatchButton key={p.name} $selected={p.name === '100% Yellow'}>
                <PatchColor $color={p.color} $short={split} />
                <span>{split ? twoLines(p.name) : p.name}</span>
              </PatchButton>
            );
          })}
        </PatchBar>
        <Transport>
          <TransportSide>
            <MetalButton aria-label="Expand"><Knob $light $size={11}><Icon size={8}><path d="M1 9h10l-5-6z" fill="#222" /></Icon></Knob></MetalButton>
            <MetalButton aria-label="Pattern window"><StopFrame /></MetalButton>
          </TransportSide>
          <TransportMain>
            <ButtonRow>
              <MetalButton aria-label="Stop"><Knob $light><Stop /></Knob></MetalButton>
              <MetalButton aria-label="Play"><Knob $light><Play color="#222" /></Knob></MetalButton>
              <MetalButton aria-label="Read series"><Knob $light><Bracket /></Knob></MetalButton>
              <MetalButton aria-label="Continuous"><Knob $light><Infinity8 /></Knob></MetalButton>
              <MetalButton $dim aria-label="Refresh"><Knob><Refresh /></Knob></MetalButton>
              <MetalButton $dim aria-label="Record"><Knob /></MetalButton>
            </ButtonRow>
            <ButtonRow>
              <StepButton><Knob $light><Chevrons /></Knob>Back</StepButton>
              <StepButton $end>Next<Knob $light><Chevrons right /></Knob></StepButton>
            </ButtonRow>
          </TransportMain>
        </Transport>
      </Footer>
    </Page>
  );
}
